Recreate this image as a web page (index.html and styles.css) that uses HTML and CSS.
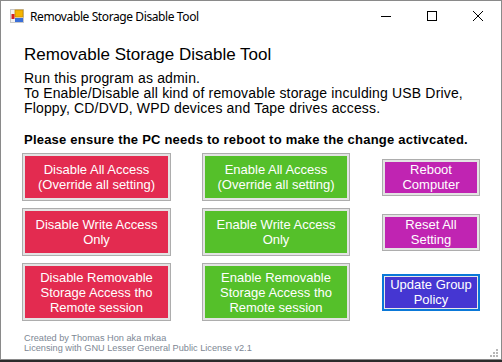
FILE: index.html
```html
<!DOCTYPE html>
<html>
<head>
<meta charset="utf-8">
<link rel="stylesheet" href="styles.css">
</head>
<body>
<div class="window">
  <div class="titlebar">
    <svg class="app-icon" width="14" height="14" viewBox="0 0 14 14">
      <rect x="0.5" y="0.5" width="13" height="13" fill="#f2f2f2" stroke="#c8c8c8"/>
      <rect x="5" y="1" width="8" height="7" fill="#f4b400" stroke="#c98a00" stroke-width="0.8"/>
      <rect x="1.5" y="5" width="3" height="5" fill="#d42020"/>
      <rect x="5" y="9" width="8" height="4" fill="#3a6fd8"/>
    </svg>
    <span class="title">Removable Storage Disable Tool</span>
    <div class="caption">
      <div class="cap-btn">
        <svg width="10" height="10" viewBox="0 0 10 10"><line x1="0" y1="5.5" x2="10" y2="5.5" stroke="#000" stroke-width="1"/></svg>
      </div>
      <div class="cap-btn">
        <svg width="10" height="10" viewBox="0 0 10 10"><rect x="0.5" y="0.5" width="9" height="9" fill="none" stroke="#000" stroke-width="1"/></svg>
      </div>
      <div class="cap-btn">
        <svg width="10" height="10" viewBox="0 0 10 10"><path d="M0 0 L10 10 M10 0 L0 10" stroke="#000" stroke-width="1"/></svg>
      </div>
    </div>
  </div>
  <div class="content">
    <h1 class="heading">Removable Storage Disable Tool</h1>
    <p class="info">Run this program as admin.<br>To Enable/Disable all kind of removable storage inculding USB Drive,<br>Floppy, CD/DVD, WPD devices and Tape drives access.</p>
    <p class="warn">Please ensure the PC needs to reboot to make the change activcated.</p>
    <div class="grid">
      <div class="btn red">Disable All Access<br>(Override all setting)</div>
      <div class="btn green">Enable All Access<br>(Override all setting)</div>
      <div class="btn purple small">Reboot<br>Computer</div>
      <div class="btn red">Disable Write Access<br>Only</div>
      <div class="btn green">Enable Write Access<br>Only</div>
      <div class="btn purple small">Reset All<br>Setting</div>
      <div class="btn red">Disable Removable<br>Storage Access tho<br>Remote session</div>
      <div class="btn green">Enable Removable<br>Storage Access tho<br>Remote session</div>
      <div class="btn blue small">Update Group<br>Policy</div>
    </div>
    <div class="footer">Created by Thomas Hon aka mkaa<br>Licensing with GNU Lesser General Public License v2.1</div>
  </div>
  <svg class="grip" width="9" height="9" viewBox="0 0 9 9">
    <rect x="7" y="1" width="2" height="2" fill="#b8b8b8"/>
    <rect x="4" y="4" width="2" height="2" fill="#b8b8b8"/>
    <rect x="7" y="4" width="2" height="2" fill="#b8b8b8"/>
    <rect x="1" y="7" width="2" height="2" fill="#b8b8b8"/>
    <rect x="4" y="7" width="2" height="2" fill="#b8b8b8"/>
    <rect x="7" y="7" width="2" height="2" fill="#b8b8b8"/>
  </svg>
</div>
</body>
</html>
```
FILE: styles.css
```css
* { box-sizing: border-box; }
html, body { margin: 0; padding: 0; }
body {
  background: #2b2b2b;
  width: 502px;
  height: 362px;
  overflow: hidden;
}
.window {
  position: relative;
  width: 502px;
  height: 360px;
  background: #fff;
  border: 1px solid #8a8a8a;
  display: flex;
  flex-direction: column;
}
.titlebar {
  height: 30px;
  display: flex;
  align-items: center;
  flex: none;
}
.app-icon {
  margin-left: 9px;
  flex: none;
}
.title {
  margin-left: 6px;
  font-family: "Noto Sans", "Open Sans", sans-serif;
  font-size: 12px;
  letter-spacing: -0.4px;
  color: #000;
  flex: 1;
}
.caption {
  display: flex;
  height: 30px;
}
.cap-btn {
  width: 46px;
  height: 30px;
  display: flex;
  align-items: center;
  justify-content: center;
}
.content {
  padding-left: 21px;
  font-family: "Liberation Sans", Arial, sans-serif;
  color: #000;
  flex: 1;
}
.heading {
  margin: 14px 0 0 2px;
  font-size: 17px;
  line-height: 19px;
  font-weight: normal;
}
.info {
  margin: 7px 0 0 2px;
  font-size: 14px;
  letter-spacing: 0.16px;
  line-height: 15px;
}
.warn {
  margin: 16px 0 0 2px;
  font-size: 13px;
  letter-spacing: 0.22px;
  line-height: 15px;
  font-weight: bold;
}
.grid {
  margin-top: 6px;
  display: grid;
  grid-template-columns: 149px 148px 99px;
  grid-template-rows: 48px 48px 58px;
  column-gap: 31px;
  row-gap: 7px;
  align-items: stretch;
}
.btn {
  display: flex;
  align-items: center;
  justify-content: center;
  text-align: center;
  color: #fff;
  font-size: 13px;
  line-height: 15px;
  border: 1px solid #adadad;
  box-shadow: inset 0 0 0 2px #e3e3e3;
}
.btn.small {
  align-self: center;
  height: 37px;
  margin-left: 1px;
}
.red { background: #e32b50; }
.green { background: #55c02a; }
.purple { background: #c024b2; }
.blue {
  background: #4536d2;
  border: 2px solid #0a78d8;
  box-shadow: inset 0 0 0 1px #e8e8e8;
}
.footer {
  margin: 12px 0 0 2px;
  font-size: 9.2px;
  line-height: 10px;
  color: #7d8794;
}
.grip {
  position: absolute;
  right: 3px;
  bottom: 2px;
}
```
